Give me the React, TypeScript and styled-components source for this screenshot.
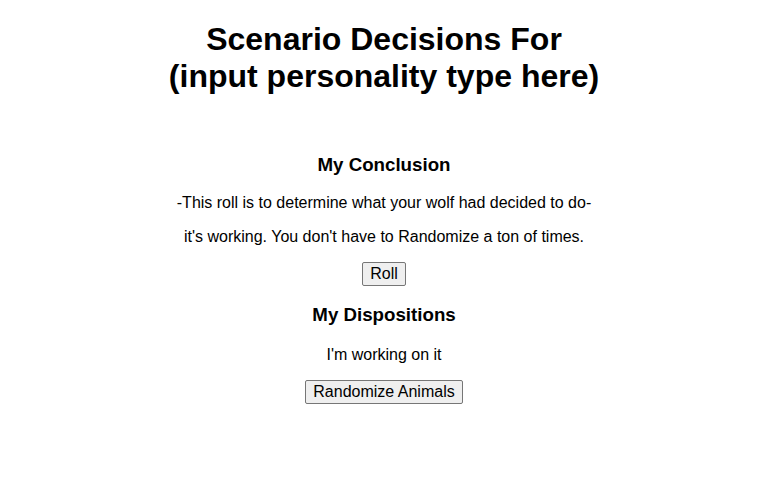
import React from 'react';
import styled, { createGlobalStyle } from 'styled-components';

const GlobalStyle = createGlobalStyle`
    body {
        margin: 8px;
        background: #ffffff;
        color: #000000;
        font-family: "Liberation Sans", Arial, sans-serif;
    }
`

function App() {
    return (
        <Page>
            <GlobalStyle />
            <Title>
                Scenario Decisions For
                <br />
                (input personality type here)
            </Title>
            <Spacer />
            <Section>
                <SectionTitle>My Conclusion</SectionTitle>
                <Text>-This roll is to determine what your wolf had decided to do-</Text>
                <Text>it's working. You don't have to Randomize a ton of times.</Text>
                <RollButton type={'button'}>Roll</RollButton>
            </Section>
            <Section>
                <SectionTitle $bottom={20}>My Dispositions</SectionTitle>
                <Text>I'm working on it</Text>
                <RollButton type={'button'}>Randomize Animals</RollButton>
            </Section>
        </Page>
    );
}

const Page = styled.main`
    text-align: center;
`
const Title = styled.h1`
    font-size: 32px;
    font-weight: bold;
    line-height: normal;
    margin: 13px 0;
`
const Spacer = styled.div`
    height: 28px;
`
const Section = styled.section`
    display: flex;
    flex-direction: column;
    align-items: center;
`
const SectionTitle = styled.h3<{ $bottom?: number }>`
    font-size: 18.72px;
    font-weight: bold;
    margin: 18px 0 ${p => p.$bottom ?? 18}px;
`
const Text = styled.p`
    font-size: 16px;
    margin: 0 0 16px;
`
const RollButton = styled.button`
    font-family: "Liberation Sans", Arial, sans-serif;
    font-size: 16px;
    line-height: normal;
    padding: 2px 7px;
    color: #000000;
    background: #efefef;
    border: 1px solid #767676;
    border-radius: 2px;
`

export default App;
